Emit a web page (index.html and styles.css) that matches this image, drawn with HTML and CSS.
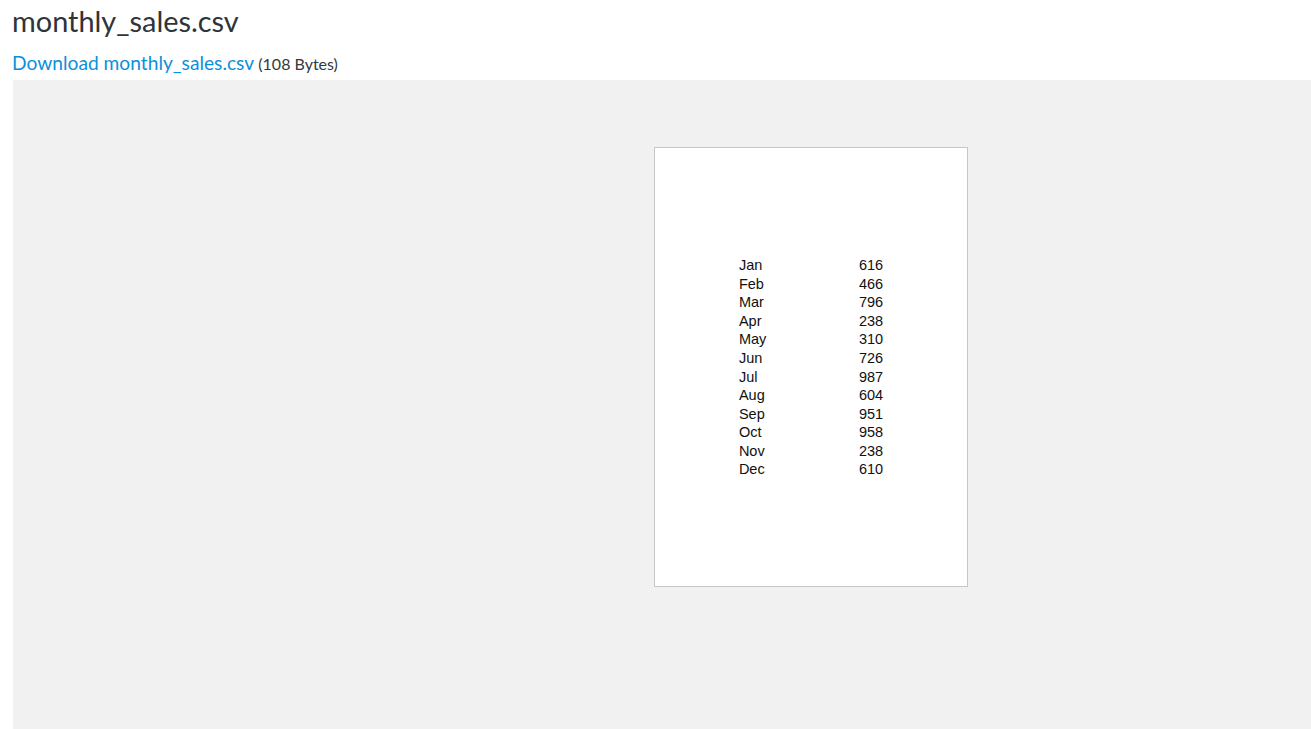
FILE: index.html
```html
<!DOCTYPE html>
<html>
<head>
<meta charset="utf-8">
<link rel="stylesheet" href="styles.css">
</head>
<body>
<h1 class="title">monthly_sales.csv</h1>
<p class="download"><a class="link" href="#">Download monthly_sales.csv</a> <span class="size">(108 Bytes)</span></p>
<div class="viewer">
  <div class="page">
    <table class="sheet">
      <tr><td class="m">Jan</td><td>616</td></tr>
      <tr><td class="m">Feb</td><td>466</td></tr>
      <tr><td class="m">Mar</td><td>796</td></tr>
      <tr><td class="m">Apr</td><td>238</td></tr>
      <tr><td class="m">May</td><td>310</td></tr>
      <tr><td class="m">Jun</td><td>726</td></tr>
      <tr><td class="m">Jul</td><td>987</td></tr>
      <tr><td class="m">Aug</td><td>604</td></tr>
      <tr><td class="m">Sep</td><td>951</td></tr>
      <tr><td class="m">Oct</td><td>958</td></tr>
      <tr><td class="m">Nov</td><td>238</td></tr>
      <tr><td class="m">Dec</td><td>610</td></tr>
    </table>
  </div>
</div>
</body>
</html>
```
FILE: styles.css
```css
html, body {
  margin: 0;
  padding: 0;
  overflow: hidden;
  background: #fff;
}
body {
  padding-left: 12px;
  font-family: Lato, "Liberation Sans", sans-serif;
}
.title {
  margin: 0;
  padding-top: 4px;
  font-size: 28.9px;
  font-weight: 400;
  line-height: 34px;
  color: #2e3439;
}
.download {
  margin: 0;
  padding-top: 12px;
  line-height: 26px;
  height: 30px;
}
.link {
  font-size: 19.2px;
  color: #0b8fdb;
  text-decoration: none;
}
.size {
  font-size: 16px;
  color: #33393e;
}
.viewer {
  margin-left: 1px;
  background: #f1f1f1;
  height: 660px;
  padding: 67px 0 0 641px;
  box-sizing: border-box;
}
.page {
  width: 312px;
  height: 438px;
  background: #fff;
  border: 1px solid #c6c6c9;
  display: flex;
  align-items: center;
  justify-content: center;
}
.sheet {
  border-collapse: collapse;
  font-family: "Liberation Sans", Arial, sans-serif;
  font-size: 14.5px;
  color: #111;
  margin-top: 1px;
}
.sheet td {
  padding: 0;
  height: 18.55px;
  line-height: 18.55px;
}
.sheet td.m {
  width: 120px;
}
```
